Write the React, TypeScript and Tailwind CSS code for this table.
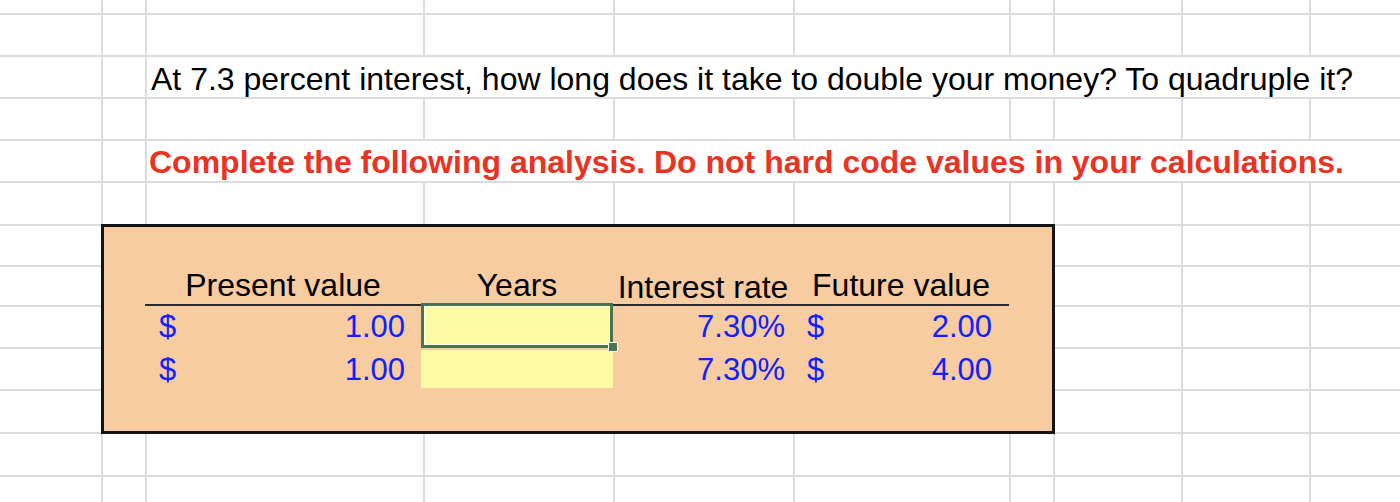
import React from 'react';

const SelectedCell = () => (
  <div className="relative bg-[#fffba5]">
    <div className="absolute -top-[3px] -bottom-[1px] left-0 right-0 border-[3px] border-[#457650] shadow-[inset_0_0_0_1px_#fffde6]" />
    <div className="absolute -right-[5px] -bottom-[5px] w-[10px] h-[10px] bg-[#457650] border border-white" />
  </div>
);

const AnalysisBox = () => {
  return (
    <div className="col-start-2 col-end-8 row-start-7 row-end-12 -m-[2px] border-[3px] border-[#141414] bg-[#f6cca0] pl-[41px] pt-[40px]">
      <div className="grid grid-cols-[276px_192px_180px_216px] w-[864px] h-[39px] items-end border-b-2 border-[#2a2a2a] text-[32px] text-black">
        <div className="text-center leading-[37px]">Present value</div>
        <div className="text-center leading-[37px]">Years</div>
        <div className="text-center leading-[33px]">Interest rate</div>
        <div className="text-center leading-[37px]">Future value</div>
      </div>

      <div className="grid grid-cols-[276px_192px_180px_216px] w-[864px] h-[41px] text-[31px] leading-[36px] text-[#1020ff]">
        <div className="flex justify-between pl-[14px] pr-[16px] pt-[3px]">
          <span>$</span>
          <span>1.00</span>
        </div>
        <SelectedCell />
        <div className="text-right pr-[8px] pt-[3px]">7.30%</div>
        <div className="flex justify-between pl-[14px] pr-[17px] pt-[3px]">
          <span>$</span>
          <span>2.00</span>
        </div>
      </div>

      <div className="grid grid-cols-[276px_192px_180px_216px] w-[864px] h-[42px] text-[31px] leading-[36px] text-[#1020ff]">
        <div className="flex justify-between pl-[14px] pr-[16px] pt-[5px]">
          <span>$</span>
          <span>1.00</span>
        </div>
        <div className="bg-[#fffba5] mt-[3px] mb-[1px]" />
        <div className="text-right pr-[8px] pt-[5px]">7.30%</div>
        <div className="flex justify-between pl-[14px] pr-[17px] pt-[5px]">
          <span>$</span>
          <span>4.00</span>
        </div>
      </div>
    </div>
  );
};

export default function App() {
  // 13 rows x 10 cols = 130 cells; the two text rows take 16, the box takes 30
  const fillers = Array.from({ length: 84 });

  return (
    <div className="w-[1400px] h-[502px] overflow-hidden bg-white font-['Liberation_Sans',Arial,sans-serif]">
      <div className="grid h-[502px] gap-[2px] bg-[#dcdcdc] grid-cols-[101px_42px_276px_188px_178px_214px_42px_126px_126px_89px] grid-rows-[13px_40px_40px_40px_40px_41px_39px_38px_40px_40px_41px_41px_25px]">
        <div className="col-start-3 col-end-11 row-start-3 flex items-end bg-white pl-[4px] text-[32px] leading-[36px] text-black whitespace-nowrap">
          At 7.3 percent interest, how long does it take to double your money? To quadruple it?
        </div>
        <div className="col-start-3 col-end-11 row-start-5 flex items-end bg-white pl-[2px] text-[32px] leading-[38px] font-bold text-[#ea3323] whitespace-nowrap">
          Complete the following analysis. Do not hard code values in your calculations.
        </div>
        <AnalysisBox />
        {fillers.map((_, i) => (
          <div key={i} className="bg-white" />
        ))}
      </div>
    </div>
  );
}
